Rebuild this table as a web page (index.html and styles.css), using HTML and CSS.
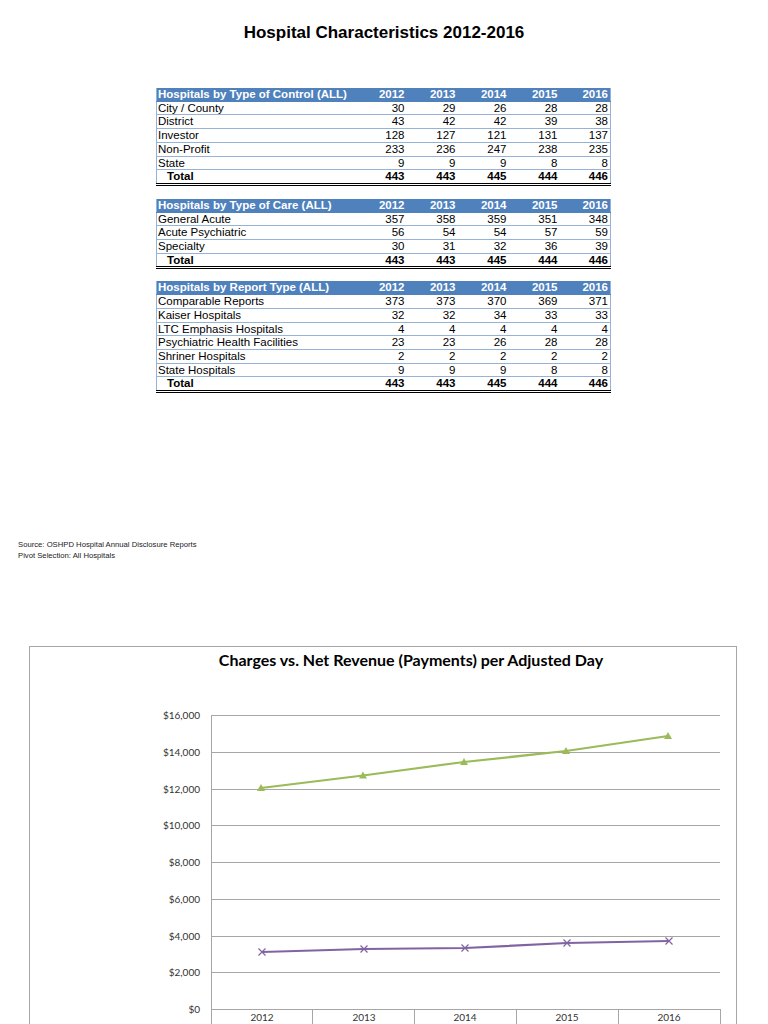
FILE: index.html
```html
<!DOCTYPE html>
<html>
<head>
<meta charset="utf-8">
<link rel="stylesheet" href="styles.css">
</head>
<body>
<h1 class="page-title">Hospital Characteristics 2012-2016</h1>

<table class="stats first">
  <colgroup><col class="c-label"><col class="c-num"><col class="c-num"><col class="c-num"><col class="c-num"><col class="c-num"></colgroup>
  <tr class="head"><td>Hospitals by Type of Control (ALL)</td><td>2012</td><td>2013</td><td>2014</td><td>2015</td><td>2016</td></tr>
  <tr><td>City / County</td><td>30</td><td>29</td><td>26</td><td>28</td><td>28</td></tr>
  <tr><td>District</td><td>43</td><td>42</td><td>42</td><td>39</td><td>38</td></tr>
  <tr><td>Investor</td><td>128</td><td>127</td><td>121</td><td>131</td><td>137</td></tr>
  <tr><td>Non-Profit</td><td>233</td><td>236</td><td>247</td><td>238</td><td>235</td></tr>
  <tr><td>State</td><td>9</td><td>9</td><td>9</td><td>8</td><td>8</td></tr>
  <tr class="total"><td>Total</td><td>443</td><td>443</td><td>445</td><td>444</td><td>446</td></tr>
</table>

<table class="stats second">
  <colgroup><col class="c-label"><col class="c-num"><col class="c-num"><col class="c-num"><col class="c-num"><col class="c-num"></colgroup>
  <tr class="head"><td>Hospitals by Type of Care (ALL)</td><td>2012</td><td>2013</td><td>2014</td><td>2015</td><td>2016</td></tr>
  <tr><td>General Acute</td><td>357</td><td>358</td><td>359</td><td>351</td><td>348</td></tr>
  <tr><td>Acute Psychiatric</td><td>56</td><td>54</td><td>54</td><td>57</td><td>59</td></tr>
  <tr><td>Specialty</td><td>30</td><td>31</td><td>32</td><td>36</td><td>39</td></tr>
  <tr class="total"><td>Total</td><td>443</td><td>443</td><td>445</td><td>444</td><td>446</td></tr>
</table>

<table class="stats third">
  <colgroup><col class="c-label"><col class="c-num"><col class="c-num"><col class="c-num"><col class="c-num"><col class="c-num"></colgroup>
  <tr class="head"><td>Hospitals by Report Type (ALL)</td><td>2012</td><td>2013</td><td>2014</td><td>2015</td><td>2016</td></tr>
  <tr><td>Comparable Reports</td><td>373</td><td>373</td><td>370</td><td>369</td><td>371</td></tr>
  <tr><td>Kaiser Hospitals</td><td>32</td><td>32</td><td>34</td><td>33</td><td>33</td></tr>
  <tr><td>LTC Emphasis Hospitals</td><td>4</td><td>4</td><td>4</td><td>4</td><td>4</td></tr>
  <tr><td>Psychiatric Health Facilities</td><td>23</td><td>23</td><td>26</td><td>28</td><td>28</td></tr>
  <tr><td>Shriner Hospitals</td><td>2</td><td>2</td><td>2</td><td>2</td><td>2</td></tr>
  <tr><td>State Hospitals</td><td>9</td><td>9</td><td>9</td><td>8</td><td>8</td></tr>
  <tr class="total"><td>Total</td><td>443</td><td>443</td><td>445</td><td>444</td><td>446</td></tr>
</table>

<div class="source">
  <div>Source: OSHPD Hospital Annual Disclosure Reports</div>
  <div>Pivot Selection: All Hospitals</div>
</div>

<div class="chart">
  <div class="chart-title">Charges vs. Net Revenue (Payments) per Adjusted Day</div>
  <svg class="plot" width="706" height="340" viewBox="0 0 706 340" xmlns="http://www.w3.org/2000/svg">
    <g stroke="#a6a6a6" stroke-width="1" fill="none">
      <line x1="181" y1="28.5" x2="690" y2="28.5"/>
      <line x1="181" y1="65.5" x2="690" y2="65.5"/>
      <line x1="181" y1="102.5" x2="690" y2="102.5"/>
      <line x1="181" y1="138.5" x2="690" y2="138.5"/>
      <line x1="181" y1="175.5" x2="690" y2="175.5"/>
      <line x1="181" y1="212.5" x2="690" y2="212.5"/>
      <line x1="181" y1="249.5" x2="690" y2="249.5"/>
      <line x1="181" y1="285.5" x2="690" y2="285.5"/>
      <line x1="181" y1="322.5" x2="690" y2="322.5"/>
      <line x1="181.5" y1="28" x2="181.5" y2="340"/>
      <line x1="282.5" y1="322" x2="282.5" y2="340"/>
      <line x1="384.5" y1="322" x2="384.5" y2="340"/>
      <line x1="486.5" y1="322" x2="486.5" y2="340"/>
      <line x1="588.5" y1="322" x2="588.5" y2="340"/>
      <line x1="690.5" y1="322" x2="690.5" y2="340"/>
    </g>
    <g class="ylab" text-anchor="end">
      <text x="170" y="32">$16,000</text>
      <text x="170" y="69">$14,000</text>
      <text x="170" y="106">$12,000</text>
      <text x="170" y="142">$10,000</text>
      <text x="170" y="179">$8,000</text>
      <text x="170" y="216">$6,000</text>
      <text x="170" y="253">$4,000</text>
      <text x="170" y="289">$2,000</text>
      <text x="170" y="326">$0</text>
    </g>
    <g class="xlab" text-anchor="middle">
      <text x="232" y="334">2012</text>
      <text x="334" y="334">2013</text>
      <text x="435" y="334">2014</text>
      <text x="537" y="334">2015</text>
      <text x="639" y="334">2016</text>
    </g>
    <polyline points="231,101 333,88.5 434,75 536,64 638,49" fill="none" stroke="#9bbb59" stroke-width="2.25" stroke-linejoin="round"/>
    <g fill="#9bbb59">
      <polygon points="231,97 235,104 227,104"/>
      <polygon points="333,84.5 337,91.5 329,91.5"/>
      <polygon points="434,71 438,78 430,78"/>
      <polygon points="536,60 540,67 532,67"/>
      <polygon points="638,45 642,52 634,52"/>
    </g>
    <polyline points="232,265 334,262 435,261 537,256 639,254" fill="none" stroke="#8064a2" stroke-width="2.25" stroke-linejoin="round"/>
    <g stroke="#8064a2" stroke-width="1.2" fill="none">
      <path d="M228.5 261.5l7 7M235.5 261.5l-7 7"/>
      <path d="M330.5 258.5l7 7M337.5 258.5l-7 7"/>
      <path d="M431.5 257.5l7 7M438.5 257.5l-7 7"/>
      <path d="M533.5 252.5l7 7M540.5 252.5l-7 7"/>
      <path d="M635.5 250.5l7 7M642.5 250.5l-7 7"/>
    </g>
  </svg>
</div>
</body>
</html>
```

FILE: styles.css
```css
html, body {
  margin: 0;
  padding: 0;
  background: #ffffff;
}
body {
  width: 768px;
  font-family: "Liberation Sans", Arial, sans-serif;
  color: #000;
}
.page-title {
  margin: 23px 0 0 0;
  font-size: 17px;
  line-height: 20px;
  font-weight: bold;
  text-align: center;
}
.stats {
  border-collapse: collapse;
  table-layout: fixed;
  width: 454px;
  margin-left: 156px;
  font-size: 11.5px;
  border-left: 1px solid #95b3d7;
  border-right: 1px solid #95b3d7;
}
.stats.first { margin-top: 45px; }
.stats.second { margin-top: 13px; }
.stats.third { margin-top: 12px; }
.c-label { width: 199px; }
.c-num { width: 51px; }
.stats td {
  padding: 0 2px 0 0;
  height: 12.7px;
  line-height: 12.7px;
  text-align: right;
  border-bottom: 1px solid #95b3d7;
  white-space: nowrap;
  overflow: hidden;
}
.stats td:first-child {
  text-align: left;
  padding-left: 1px;
}
.stats tr.head td {
  background: #4f81bd;
  color: #fff;
  font-weight: bold;
  border-bottom: 1px solid #4f81bd;
  height: 12.3px;
}
.stats tr.total td {
  font-weight: bold;
  border-top: 1px solid #000;
  border-bottom: 3px double #000;
  height: 11.7px;
}
.stats tr.total td:first-child {
  padding-left: 10px;
}
.source {
  margin: 146px 0 0 18px;
  font-size: 7.7px;
  line-height: 11px;
  color: #222;
}
.chart {
  margin: 85px 0 0 29px;
  width: 706px;
  height: 400px;
  border: 1px solid #a6a6a6;
}
.chart-title {
  height: 40px;
  box-sizing: border-box;
  padding: 3px 0 0 56px;
  text-align: center;
  font-family: Lato, "Open Sans", sans-serif;
  font-weight: bold;
  font-size: 16px;
  line-height: 20px;
  color: #000;
}
.plot {
  display: block;
}
.ylab text, .xlab text {
  font-family: Lato, "Open Sans", sans-serif;
  font-size: 10px;
  fill: #333;
}
```
